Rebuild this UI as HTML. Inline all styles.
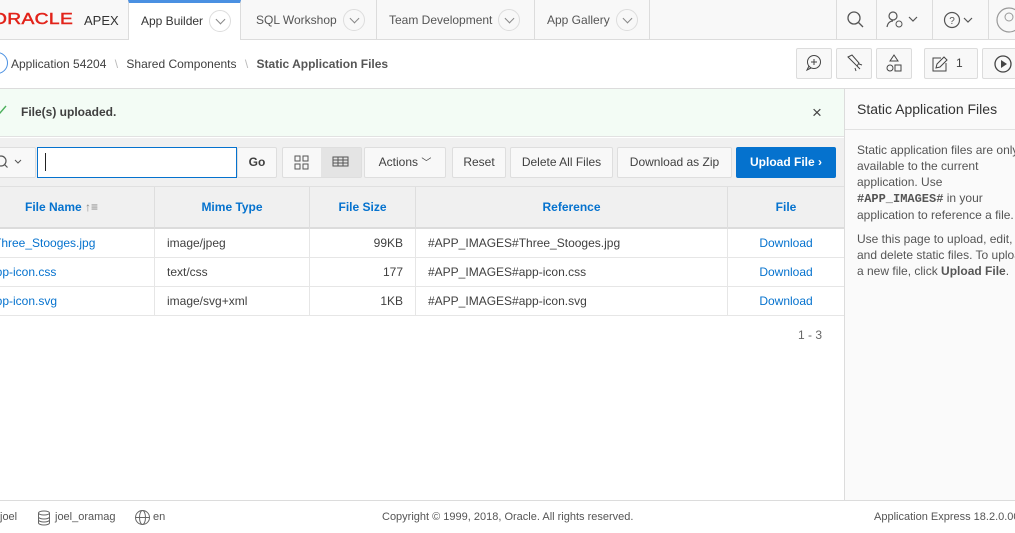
<!DOCTYPE html>
<html><head><meta charset="utf-8"><style>
*{box-sizing:border-box;margin:0;padding:0}
body{width:1015px;height:533px;overflow:hidden;font-family:"Liberation Sans",sans-serif;font-size:12px;color:#404040;background:#fff;position:relative}
.a{position:absolute}
.top{left:0;top:0;width:1015px;height:40px;background:#f8f8f8;border-bottom:1px solid #dcdcdc}
.tab{top:0;height:40px;border-right:1px solid #dcdcdc;color:#555;font-size:12px;line-height:40px;padding-left:12px}
.chev{display:inline-block;width:22px;height:22px;border:1px solid #ddd;border-radius:50%;vertical-align:middle;margin-left:6px;position:relative;top:-1px}
.chev:after{content:"";position:absolute;left:7px;top:5px;width:6px;height:6px;border-right:1px solid #888;border-bottom:1px solid #888;transform:rotate(45deg)}
.btn{top:147px;height:31px;background:#f8f8f8;border:1px solid #dedede;border-radius:2px;line-height:29px;text-align:center;color:#404040;font-size:12px}
.hd{top:187px;height:42px;line-height:40px;color:#0572ce;font-weight:bold;text-align:center;border-right:1px solid #dedede}
.cell{height:29px;line-height:29px;border-right:1px solid #e6e6e6;border-bottom:1px solid #e6e6e6;padding:0 12px;white-space:nowrap;overflow:hidden}
.lnk{color:#0572ce}
.ib{top:48px;height:31px;border:1px solid #dcdcdc;border-radius:2px;background:#f8f8f8}
</style></head><body>
<div class="a top"></div>
<div class="a" style="left:-8px;top:11px;font-size:16px;color:#e2231a;letter-spacing:0.3px;transform:scaleX(1.2);transform-origin:left;-webkit-text-stroke:0.5px #e2231a">ORACLE</div>
<div class="a" style="left:84px;top:13px;font-size:13px;color:#333">APEX</div>
<div class="a tab" style="left:128px;width:113px;background:#fff;border-top:3px solid #4a90e2;border-left:1px solid #dcdcdc;height:40px;line-height:36px;color:#333">App Builder<span class="chev"></span></div>
<div class="a tab" style="left:241px;width:136px;padding-left:15px">SQL Workshop<span class="chev"></span></div>
<div class="a tab" style="left:377px;width:158px">Team Development<span class="chev"></span></div>
<div class="a tab" style="left:535px;width:115px">App Gallery<span class="chev"></span></div>
<div class="a" style="left:836px;top:0;width:1px;height:40px;background:#dcdcdc"></div>
<div class="a" style="left:876px;top:0;width:1px;height:40px;background:#dcdcdc"></div>
<div class="a" style="left:932px;top:0;width:1px;height:40px;background:#dcdcdc"></div>
<div class="a" style="left:988px;top:0;width:1px;height:40px;background:#dcdcdc"></div>
<svg class="a" style="left:846px;top:10px" width="20" height="20"><circle cx="8" cy="8" r="6" fill="none" stroke="#555" stroke-width="1.3"/><path d="M12.5 12.5L17 17" stroke="#555" stroke-width="1.3"/></svg>
<svg class="a" style="left:886px;top:10px" width="36" height="20"><circle cx="7" cy="6" r="4" fill="none" stroke="#555" stroke-width="1.2"/><path d="M1 17c1-5 4-6 6-6" fill="none" stroke="#555" stroke-width="1.2"/><circle cx="13" cy="14" r="3" fill="none" stroke="#555"/><path d="M23 7l4 4 4-4" fill="none" stroke="#555" stroke-width="1.2"/></svg>
<svg class="a" style="left:943px;top:10px" width="36" height="20"><circle cx="9" cy="10" r="7.5" fill="none" stroke="#555" stroke-width="1.2"/><text x="9" y="14" font-size="10" text-anchor="middle" fill="#555" font-family="Liberation Sans">?</text><path d="M21 8l4 4 4-4" fill="none" stroke="#555" stroke-width="1.2"/></svg>
<svg class="a" style="left:995px;top:6px" width="20" height="28"><circle cx="14" cy="14" r="12" fill="none" stroke="#999" stroke-width="1.2"/><circle cx="14" cy="11" r="4" fill="none" stroke="#999"/></svg>

<div class="a" style="left:0;top:40px;width:1015px;height:49px;border-bottom:1px solid #dcdcdc"></div>
<div class="a" style="left:-14px;top:52px;width:22px;height:22px;border:1.5px solid #4a90e2;border-radius:50%"></div>
<div class="a" style="left:11px;top:57px;color:#404040;white-space:nowrap">Application 54204 <span style="color:#bbb;margin:0 5px">\</span> Shared Components <span style="color:#bbb;margin:0 5px">\</span> <b style="color:#555">Static Application Files</b></div>
<div class="a ib" style="left:796px;width:36px"><svg width="34" height="29"><circle cx="17" cy="13" r="6.5" fill="none" stroke="#444"/><path d="M14 13h6M17 10v6M12 17l-2 4 4-2" fill="none" stroke="#444"/></svg></div>
<div class="a ib" style="left:836px;width:36px"><svg width="34" height="29"><path d="M11 8l4-2 7 8-2 3z M20 17l3 3M22 15l3 1M18 19l1 3" fill="none" stroke="#444"/></svg></div>
<div class="a ib" style="left:876px;width:36px"><svg width="34" height="29"><path d="M17 6l4 6h-8z" fill="none" stroke="#444"/><circle cx="13" cy="19" r="3" fill="none" stroke="#444"/><rect x="18" y="16" width="6" height="6" fill="none" stroke="#444"/></svg></div>
<div class="a ib" style="left:924px;width:54px"><svg class="a" style="left:7px;top:7px" width="16" height="16"><path d="M12 1l3 3-7 7-4 1 1-4z M9 2H1v13h13V7" fill="none" stroke="#444"/></svg><span class="a" style="left:31px;top:7px">1</span></div>
<div class="a ib" style="left:982px;width:40px"><svg width="38" height="29"><circle cx="20" cy="15" r="8" fill="none" stroke="#444" stroke-width="1.3"/><path d="M18 11v8l6-4z" fill="#444"/></svg></div>

<div class="a" style="left:0;top:89px;width:844px;height:48px;background:#f3fcf5;border-bottom:1px solid #e2e2e2"></div>
<svg class="a" style="left:-4px;top:104px" width="12" height="12"><path d="M1 6l3 3 6-7" fill="none" stroke="#4cb05c" stroke-width="1.4"/></svg>
<div class="a" style="left:21px;top:105px;font-weight:bold;color:#404040">File(s) uploaded.</div>
<div class="a" style="left:812px;top:103px;font-size:17px;color:#444">×</div>

<div class="a" style="left:844px;top:89px;width:171px;height:411px;background:#fafafa;border-left:1px solid #dcdcdc"></div>
<div class="a" style="left:845px;top:89px;width:170px;height:41px;border-bottom:1px solid #e2e2e2"></div>
<div class="a" style="left:857px;top:101px;font-size:14px;color:#333">Static Application Files</div>
<div class="a" style="left:857px;top:142px;width:250px;font-size:12px;line-height:16px;color:#555;white-space:nowrap">Static application files are only<br>available to the current<br>application. Use<br><b style="font-family:'Liberation Mono',monospace">#APP_IMAGES#</b> in your<br>application to reference a file.<div style="margin-top:8px">Use this page to upload, edit,<br>and delete static files. To upload<br>a new file, click <b>Upload File</b>.</div></div>

<div class="a" style="left:0;top:138px;width:844px;height:49px;background:#f0f0f0;border-bottom:1px solid #e0e0e0"></div>
<div class="a btn" style="left:-10px;width:46px"><svg width="44" height="29"><circle cx="10" cy="13" r="5" fill="none" stroke="#555" stroke-width="1.2"/><path d="M13.5 16.5l3 3" stroke="#555" stroke-width="1.2"/><path d="M24 12l3 3 3-3" fill="none" stroke="#555"/></svg></div>
<div class="a" style="left:37px;top:147px;width:200px;height:31px;background:#fff;border:1px solid #0572ce"></div>
<div class="a" style="left:45px;top:153px;width:1px;height:18px;background:#222"></div>
<div class="a btn" style="left:237px;width:40px;font-weight:bold">Go</div>
<div class="a btn" style="left:282px;width:80px"></div>
<div class="a" style="left:321px;top:148px;width:40px;height:29px;background:#e4e4e4"></div>
<svg class="a" style="left:294px;top:155px" width="16" height="16"><rect x="1" y="1" width="5" height="5" fill="none" stroke="#555"/><rect x="9" y="1" width="5" height="5" fill="none" stroke="#555"/><rect x="1" y="9" width="5" height="5" fill="none" stroke="#555"/><rect x="9" y="9" width="5" height="5" fill="none" stroke="#555"/></svg>
<svg class="a" style="left:332px;top:155px" width="18" height="14"><rect x="1" y="2" width="15" height="9" fill="none" stroke="#555"/><path d="M1 5h15M1 8h15M6 2v9M11 2v9" stroke="#555"/></svg>
<div class="a btn" style="left:364px;width:82px">Actions <span style="font-size:10px">﹀</span></div>
<div class="a btn" style="left:452px;width:54px">Reset</div>
<div class="a btn" style="left:510px;width:103px">Delete All Files</div>
<div class="a btn" style="left:617px;width:115px">Download as Zip</div>
<div class="a btn" style="left:736px;width:100px;background:#0572ce;border-color:#0572ce;color:#fff;font-weight:bold">Upload File ›</div>

<div class="a" style="left:0;top:187px;width:844px;height:42px;background:#f0f0f0;border-bottom:2px solid #dcdcdc"></div>
<div class="a hd" style="left:0;width:155px;text-align:left;padding-left:25px">File Name <span style="color:#888;font-weight:normal">↑≡</span></div>
<div class="a hd" style="left:155px;width:155px">Mime Type</div>
<div class="a hd" style="left:310px;width:106px">File Size</div>
<div class="a hd" style="left:416px;width:312px">Reference</div>
<div class="a hd" style="left:728px;width:116px;border-right:none">File</div>

<div class="a" style="left:0;top:229px;width:844px">
<div style="display:flex"><div class="cell lnk" style="width:155px;padding-left:0;text-indent:-6px">Three_Stooges.jpg</div><div class="cell" style="width:155px">image/jpeg</div><div class="cell" style="width:106px;text-align:right">99KB</div><div class="cell" style="width:312px">#APP_IMAGES#Three_Stooges.jpg</div><div class="cell lnk" style="width:116px;text-align:center;border-right:none">Download</div></div>
<div style="display:flex"><div class="cell lnk" style="width:155px;padding-left:0;text-indent:-11px">app-icon.css</div><div class="cell" style="width:155px">text/css</div><div class="cell" style="width:106px;text-align:right">177</div><div class="cell" style="width:312px">#APP_IMAGES#app-icon.css</div><div class="cell lnk" style="width:116px;text-align:center;border-right:none">Download</div></div>
<div style="display:flex"><div class="cell lnk" style="width:155px;padding-left:0;text-indent:-11px">app-icon.svg</div><div class="cell" style="width:155px">image/svg+xml</div><div class="cell" style="width:106px;text-align:right">1KB</div><div class="cell" style="width:312px">#APP_IMAGES#app-icon.svg</div><div class="cell lnk" style="width:116px;text-align:center;border-right:none">Download</div></div>
</div>
<div class="a" style="left:798px;top:328px;font-size:12px;color:#666">1 - 3</div>

<div class="a" style="left:0;top:500px;width:1015px;height:33px;border-top:1px solid #dcdcdc;background:#fff"></div>
<div class="a" style="left:0;top:511px;font-size:11px;color:#555">joel</div>
<svg class="a" style="left:37px;top:510px" width="14" height="16"><ellipse cx="7" cy="3" rx="5.5" ry="2" fill="none" stroke="#666"/><path d="M1.5 3v10c0 1 2.5 2 5.5 2s5.5-1 5.5-2V3M1.5 7c0 1 2.5 2 5.5 2s5.5-1 5.5-2M1.5 10c0 1 2.5 2 5.5 2s5.5-1 5.5-2" fill="none" stroke="#666"/></svg>
<div class="a" style="left:55px;top:511px;font-size:11px;color:#555">joel_oramag</div>
<svg class="a" style="left:134px;top:509px" width="17" height="17"><circle cx="8.5" cy="8.5" r="7" fill="none" stroke="#666"/><ellipse cx="8.5" cy="8.5" rx="3" ry="7" fill="none" stroke="#666"/><path d="M1.5 8.5h14" stroke="#666"/></svg>
<div class="a" style="left:153px;top:511px;font-size:11px;color:#555">en</div>
<div class="a" style="left:382px;top:511px;font-size:11px;color:#555">Copyright © 1999, 2018, Oracle. All rights reserved.</div>
<div class="a" style="left:874px;top:511px;font-size:11px;color:#555;white-space:nowrap">Application Express 18.2.0.00.12</div>
</body></html>
